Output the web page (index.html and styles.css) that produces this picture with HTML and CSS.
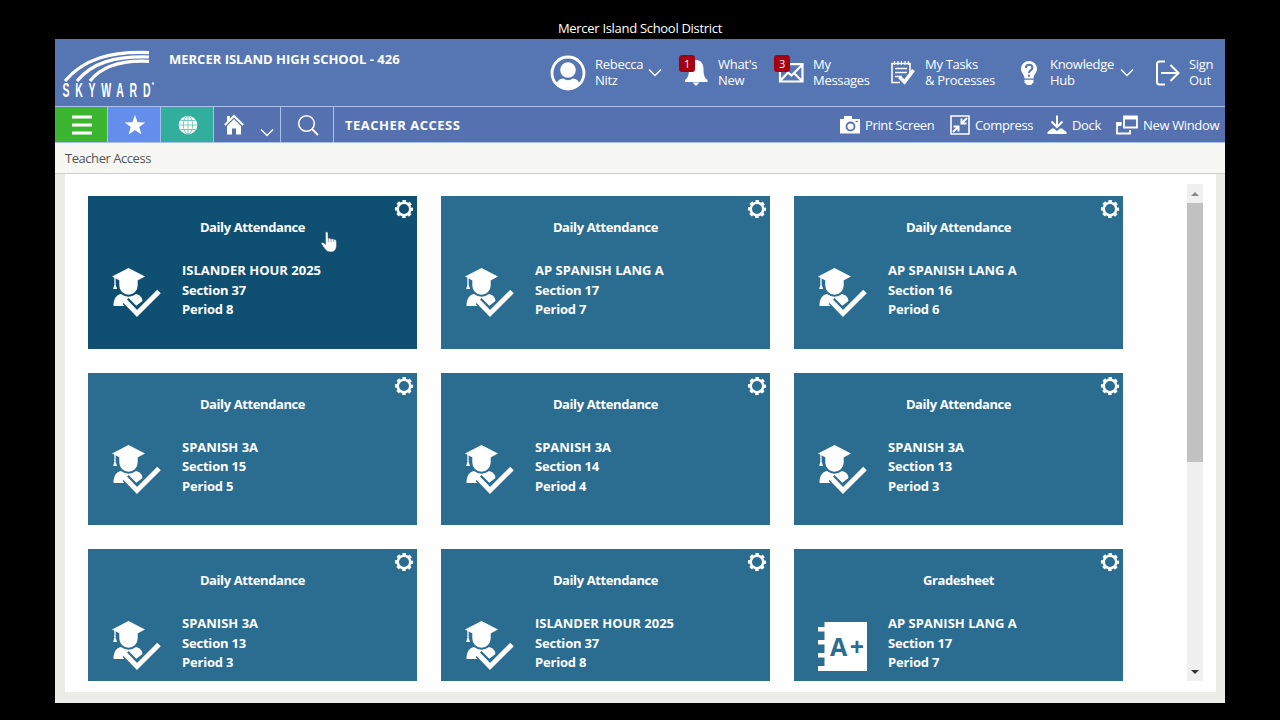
FILE: index.html
```
<!DOCTYPE html>
<html lang="en">
<head>
    <meta charset="utf-8">
    <title>Teacher Access</title>
    <link rel="stylesheet" href="styles.css">
</head>
<body>

    <!-- Shared icons -->
    <svg class="sprite">
        <symbol id="chevron" viewBox="0 0 14 9">
            <path d="M1 1.5 L7 7.5 L13 1.5" fill="none" stroke="currentColor" stroke-width="1.3"/>
        </symbol>
        <symbol id="gear" viewBox="0 0 20 20">
            <circle cx="10" cy="10" r="6.3" fill="none" stroke="currentColor" stroke-width="2.6"/>
            <circle cx="10" cy="10" r="7.8" fill="none" stroke="currentColor" stroke-width="2.6" stroke-dasharray="3.4 2.726" stroke-dashoffset="1.7"/>
        </symbol>
        <symbol id="student" viewBox="0 0 50 52">
            <path d="M1 9.5 L17.5 1 L34 9.5 L27 13.2 L8 13.2 Z" fill="currentColor"/>
            <path d="M8.3 12 H26.7 V18.5 A9.2 9.2 0 0 1 8.3 18.5 Z" fill="currentColor"/>
            <path d="M4 10 V17" stroke="currentColor" stroke-width="1.3"/>
            <path d="M4 15.5 L6 22 H2.2 Z" fill="currentColor"/>
            <path d="M2.5 39 C2.5 32 5 28 10 27 Q17.5 32.5 25 27 C29 28 31 30 31.5 34 L25 39 Z" fill="currentColor"/>
            <path class="cutout" d="M14.5 34 L26 45.5 L47.5 24.5" fill="none" stroke-width="8.5"/>
            <path d="M13.5 33.5 L26 46.5 L48 24.5" fill="none" stroke="currentColor" stroke-width="5"/>
        </symbol>
    </svg>

    <div class="caption">Mercer Island School District</div>

    <div class="window">
        <header>
            <svg class="logo" width="96" height="52" viewBox="0 0 96 52">
                <g fill="none" stroke="#fff" stroke-width="3.2">
                    <path d="M3 32 C21 11 47 2 87 3.600"/>
                    <path d="M15 32 C30 14 52 7 87 8"/>
                    <path d="M28 32 C40 17 60 11 87 12.400"/>
                </g>
                <text class="logo-text" x="1" y="48" textLength="176" transform="scale(0.5 1)">SKYWARD</text>
                <circle cx="91" cy="34.500" r="1.200" fill="#dfe8ff"/>
            </svg>
            <div class="school">MERCER ISLAND HIGH SCHOOL - 426</div>

            <nav class="account">
                <a class="user">
                    <svg width="36" height="36" viewBox="0 0 36 36">
                        <circle cx="18" cy="18" r="16" fill="none" stroke="#fff" stroke-width="2.800"/>
                        <circle cx="18" cy="15" r="7.800" fill="#fff"/>
                        <path d="M6.500 28.500 Q8 24 13 23.500 Q18 27 23 23.500 Q28 24 29.500 28.500 Q25 33 18 33 Q11 33 6.500 28.500 Z" fill="#fff"/>
                    </svg>
                    <span>Rebecca<br>Nitz</span>
                    <svg class="chev" width="14" height="9"><use href="#chevron"/></svg>
                </a>
                <a class="news">
                    <svg width="30" height="32" viewBox="0 0 30 32">
                        <path d="M17 3 C22 3 24.500 7 24.500 12 C24.500 19 26 21 28.500 23 V25 H6 V23 C8.500 21 10 19 10 12 C10 7 13 3 17 3 Z" fill="#fff"/>
                        <path d="M13.500 25.500 H20.500 L17 29 Z" fill="#fff"/>
                    </svg>
                    <b class="badge">1</b>
                    <span>What's<br>New</span>
                </a>
                <a class="messages">
                    <svg width="30" height="32" viewBox="0 0 30 32">
                        <path d="M6 7.200 H28.500 V24.500 H6 Z M6 24 L14 15.500 L17.500 18.500 L28 8 M20 16 L28 24" fill="none" stroke="#fff" stroke-width="2.200"/>
                    </svg>
                    <b class="badge">3</b>
                    <span>My<br>Messages</span>
                </a>
                <a class="tasks">
                    <svg width="26" height="26" viewBox="0 0 26 26">
                        <path d="M20 14 V3.500 H2 V22.500 H10" fill="none" stroke="#fff" stroke-width="1.600"/>
                        <path d="M4.500 1 V5 M8 1 V5 M11.500 1 V5 M15 1 V5 M18.300 1 V5" stroke="#fff" stroke-width="1.200"/>
                        <path d="M5 8.500 H17 M5 12.500 H17 M5 16.500 H12" stroke="#fff" stroke-width="1.500"/>
                        <path d="M9.500 17 L14.500 22 L23.500 10" fill="none" stroke="#fff" stroke-width="3.600"/>
                    </svg>
                    <span>My Tasks<br>&amp; Processes</span>
                </a>
                <a class="hub">
                    <svg width="18" height="26" viewBox="0 0 18 26">
                        <path d="M9 1 A8 8 0 0 1 17 9 C17 13 13.500 14.500 13.500 18.500 H4.500 C4.500 14.500 1 13 1 9 A8 8 0 0 1 9 1 Z" fill="#fff"/>
                        <path d="M5.800 8 Q6 4.800 9.200 4.800 Q12.400 4.800 12.400 7.600 Q12.400 9.300 10.600 10.400 Q9 11.400 9 13" fill="none" stroke="#5575b3" stroke-width="2"/>
                        <path d="M8 14.800 H10 V16.800 H8 Z" fill="#5575b3"/>
                        <path d="M4.500 19.800 H13.500 V22.300 L11 25 H7 L4.500 22.300 Z" fill="#fff"/>
                    </svg>
                    <span>Knowledge<br>Hub</span>
                    <svg class="chev" width="14" height="9"><use href="#chevron"/></svg>
                </a>
                <a class="signout">
                    <svg width="26" height="26" viewBox="0 0 26 26">
                        <path d="M10 1.500 H4.500 Q2 1.500 2 4 V22 Q2 24.500 4.500 24.500 H10 M6 13 H24 M15.500 5 L23.500 13 L15.500 21" fill="none" stroke="#fff" stroke-width="2"/>
                    </svg>
                    <span>Sign<br>Out</span>
                </a>
            </nav>
        </header>

        <div class="toolbar">
            <a class="tool menu">
                <svg width="22" height="20" viewBox="0 0 22 20"><path d="M1 2 H21 M1 10 H21 M1 18 H21" stroke="#fff" stroke-width="3"/></svg>
            </a>
            <a class="tool favorites">
                <svg width="22" height="22" viewBox="0 0 22 22"><path d="M11 1 L13.600 8.300 L21.300 8.400 L15.200 13.100 L17.400 20.500 L11 16.100 L4.600 20.500 L6.800 13.100 L0.700 8.400 L8.400 8.300 Z" fill="#fff"/></svg>
            </a>
            <a class="tool site">
                <svg width="20" height="20" viewBox="0 0 20 20">
                    <circle cx="10" cy="10" r="9.300" fill="#fff"/>
                    <path d="M10 1 V19 M1 10 H19 M2.500 5.500 H17.500 M2.500 14.500 H17.500" stroke="#6cc5bb" stroke-width="0.900"/>
                    <ellipse cx="10" cy="10" rx="4.600" ry="9" fill="none" stroke="#6cc5bb" stroke-width="0.900"/>
                </svg>
            </a>
            <a class="tool home">
                <svg width="20" height="21" viewBox="0 0 20 21">
                    <path d="M0.800 11 L10 2 L19.200 11" fill="none" stroke="#fff" stroke-width="2"/>
                    <path d="M3 2 H6 V6 L3 8.500 Z" fill="#fff"/>
                    <path d="M10 5 L17 12 V20.500 H12 V14.500 H8 V20.500 H3 V12 Z" fill="#fff"/>
                </svg>
                <svg class="chev" width="14" height="9"><use href="#chevron"/></svg>
            </a>
            <a class="tool search">
                <svg width="22" height="22" viewBox="0 0 22 22">
                    <circle cx="9.500" cy="9.500" r="7.800" fill="none" stroke="#fff" stroke-width="1.600"/>
                    <path d="M15 15 L21 21" stroke="#fff" stroke-width="1.800"/>
                </svg>
            </a>
            <h1>TEACHER ACCESS</h1>

            <nav class="actions">
                <a class="print">
                    <svg width="20" height="20" viewBox="0 0 20 20">
                        <path d="M0 4 H4 V1 H12 V4 H20 V18.500 H0 Z" fill="#fff"/>
                        <path d="M15.500 6.500 H18" stroke="#5571b0" stroke-width="1.200"/>
                        <circle cx="10.500" cy="11.500" r="4" fill="none" stroke="#5571b0" stroke-width="1.800"/>
                    </svg>
                    Print Screen
                </a>
                <a class="compress">
                    <svg width="20" height="20" viewBox="0 0 20 20">
                        <path d="M1 1 H19 V19 H1 Z" fill="none" stroke="#fff" stroke-width="1.600"/>
                        <path d="M17 3 L12.500 7.500 M11.500 3.500 V8.500 H16.500 M3 17 L7.500 12.500 M8.500 16.500 V11.500 H3.500" fill="none" stroke="#fff" stroke-width="2"/>
                    </svg>
                    Compress
                </a>
                <a class="dock">
                    <svg width="20" height="20" viewBox="0 0 20 20">
                        <path d="M10 0.500 V11 M4.500 6.500 L10 12 L15.500 6.500" fill="none" stroke="#fff" stroke-width="2"/>
                        <path d="M0.500 19 V17 L5 13.500 H7 L10 16 L13 13.500 H15 L19.500 17 V19 Z" fill="#fff"/>
                    </svg>
                    Dock
                </a>
                <a class="new-window">
                    <svg width="22" height="20" viewBox="0 0 22 20">
                        <path d="M8 1.500 H21 V12.500 H8 Z M5.500 8 H1 V18.500 H14 V15" fill="none" stroke="#fff" stroke-width="1.800"/>
                        <path d="M8 1 H21 V4.500 H8 Z M1 7.500 H5.500 V11 H1 Z" fill="#fff"/>
                    </svg>
                    New Window
                </a>
            </nav>
        </div>

        <div class="breadcrumb">Teacher Access</div>

        <main>
            <div class="panel">
                <div class="tiles">
                    <section class="tile active">
                        <svg class="gear"><use href="#gear"/></svg>
                        <h2>Daily Attendance</h2>
                        <div class="info">
                            <svg><use href="#student"/></svg>
                            <p><span class="course">ISLANDER HOUR 2025</span><br>Section 37<br>Period 8</p>
                        </div>
                    </section>
                    <section class="tile">
                        <svg class="gear"><use href="#gear"/></svg>
                        <h2>Daily Attendance</h2>
                        <div class="info">
                            <svg><use href="#student"/></svg>
                            <p><span class="course">AP SPANISH LANG A</span><br>Section 17<br>Period 7</p>
                        </div>
                    </section>
                    <section class="tile">
                        <svg class="gear"><use href="#gear"/></svg>
                        <h2>Daily Attendance</h2>
                        <div class="info">
                            <svg><use href="#student"/></svg>
                            <p><span class="course">AP SPANISH LANG A</span><br>Section 16<br>Period 6</p>
                        </div>
                    </section>
                    <section class="tile">
                        <svg class="gear"><use href="#gear"/></svg>
                        <h2>Daily Attendance</h2>
                        <div class="info">
                            <svg><use href="#student"/></svg>
                            <p><span class="course">SPANISH 3A</span><br>Section 15<br>Period 5</p>
                        </div>
                    </section>
                    <section class="tile">
                        <svg class="gear"><use href="#gear"/></svg>
                        <h2>Daily Attendance</h2>
                        <div class="info">
                            <svg><use href="#student"/></svg>
                            <p><span class="course">SPANISH 3A</span><br>Section 14<br>Period 4</p>
                        </div>
                    </section>
                    <section class="tile">
                        <svg class="gear"><use href="#gear"/></svg>
                        <h2>Daily Attendance</h2>
                        <div class="info">
                            <svg><use href="#student"/></svg>
                            <p><span class="course">SPANISH 3A</span><br>Section 13<br>Period 3</p>
                        </div>
                    </section>
                    <section class="tile">
                        <svg class="gear"><use href="#gear"/></svg>
                        <h2>Daily Attendance</h2>
                        <div class="info">
                            <svg><use href="#student"/></svg>
                            <p><span class="course">SPANISH 3A</span><br>Section 13<br>Period 3</p>
                        </div>
                    </section>
                    <section class="tile">
                        <svg class="gear"><use href="#gear"/></svg>
                        <h2>Daily Attendance</h2>
                        <div class="info">
                            <svg><use href="#student"/></svg>
                            <p><span class="course">ISLANDER HOUR 2025</span><br>Section 37<br>Period 8</p>
                        </div>
                    </section>
                    <section class="tile">
                        <svg class="gear"><use href="#gear"/></svg>
                        <h2>Gradesheet</h2>
                        <div class="info">
                            <svg viewBox="0 0 50 52">
                                <path d="M7.500 2 H50 V51 H1 V46 H7.500 V37.500 H1 V33 H7.500 V24.500 H1 V20 H7.500 V11.500 H1 V7 H7.500 Z" fill="currentColor"/>
                                <text class="grade" x="13" y="36" textLength="34">A+</text>
                            </svg>
                            <p><span class="course">AP SPANISH LANG A</span><br>Section 17<br>Period 7</p>
                        </div>
                    </section>
                </div>

                <div class="scrollbar">
                    <svg class="arrow up" width="16" height="19" viewBox="0 0 16 19"><path d="M4 12 L8 8 L12 12 Z"/></svg>
                    <div class="thumb"></div>
                    <svg class="arrow down" width="16" height="18" viewBox="0 0 16 18"><path d="M4 7 L8 11 L12 7 Z"/></svg>
                </div>
            </div>
        </main>
    </div>

    <!-- Mouse pointer over the first tile -->
    <svg class="pointer" width="18" height="22" viewBox="0 0 18 22">
        <path d="M6 1 Q8 0 8 2.500 V7 L15 8.500 Q16.500 9 16.500 11 V15 Q16 21 10.500 21 Q7 21 5 18 L1.200 12.800 Q1.500 10.500 4 12 L5.500 13.500 V2 Q5.500 1.200 6 1 Z" fill="#fff" stroke="#3c4a55" stroke-width="0.500"/>
        <path d="M8.300 7.500 V11 M11 8 V11 M13.700 8.500 V11" stroke="#5d7f97" stroke-width="0.700"/>
    </svg>

</body>
</html>
```
FILE: styles.css
```
* {
    box-sizing: border-box;
}

body {
    margin: 0;
    height: 720px;
    overflow: hidden;
    background-color: #000;
    color: #fff;
    font-family: "Open Sans", "Noto Sans", sans-serif;
    font-size: 13px;
}

svg {
    display: block;
    flex: none;
}

.sprite {
    position: absolute;
    width: 0;
    height: 0;
}

.caption {
    height: 39px;
    padding-top: 19px;
    line-height: 18px;
    text-align: center;
    letter-spacing: -0.3px;
}

.window {
    width: 1170px;
    height: 664px;
    margin: 0 auto;
    display: flex;
    flex-direction: column;
    background-color: #ecece8;
}

/* Top bar */
header {
    display: flex;
    height: 67px;
    background-color: #5575b3;
}

.logo {
    margin: 10px 0 0 7px;
}

.logo-text {
    font-family: "Liberation Sans", sans-serif;
    font-size: 21px;
    font-weight: bold;
    fill: #fff;
}

.school {
    margin: 11px 0 0 11px;
    line-height: 18px;
    font-weight: bold;
    white-space: nowrap;
}

.account {
    display: flex;
    margin-left: auto;
}

.account a {
    position: relative;
    display: flex;
    align-items: center;
    line-height: 16px;
    letter-spacing: -0.3px;
    white-space: nowrap;
}

.account span {
    margin-top: -2px;
}

.account .user { width: 129px; gap: 9px; }
.account .news { width: 95px; gap: 9px; }
.account .messages { width: 116px; gap: 9px; }
.account .tasks { width: 130px; gap: 9px; }
.account .hub { width: 135px; gap: 12px; }
.account .signout { width: 70px; gap: 8px; }

.user span { width: 44px; }
.hub span { width: 58px; }

.badge {
    position: absolute;
    left: 0;
    top: 16px;
    width: 16px;
    height: 17px;
    border-radius: 3px;
    background-color: #a50012;
    font-size: 11px;
    font-weight: normal;
    line-height: 17px;
    text-align: center;
}

/* Second bar */
.toolbar {
    display: flex;
    height: 37px;
    background-color: #5571b0;
    border-top: 1px solid #a9c0ee;
    border-bottom: 1px solid #a9c0ee;
}

.tool {
    display: flex;
    align-items: center;
    justify-content: center;
    width: 53px;
    padding-left: 1px;
    border-right: 1px solid #a9c0ee;
}

.menu { background-color: #3cb530; }
.favorites { background-color: #648eec; }
.site { background-color: #31ae9c; }

.home {
    width: 67px;
    padding-left: 3px;
    gap: 16px;
}

.home .chev {
    margin-top: 16px;
}

.toolbar h1 {
    margin: 0 0 0 11px;
    font-size: 13px;
    line-height: 37px;
    letter-spacing: 0.5px;
    white-space: nowrap;
}

.actions {
    display: flex;
    margin-left: auto;
}

.actions a {
    display: flex;
    align-items: center;
    gap: 5px;
    letter-spacing: -0.35px;
    white-space: nowrap;
}

.print { width: 110px; }
.compress { width: 97px; }
.dock { width: 69px; }
.new-window { width: 109px; }

.breadcrumb {
    height: 31px;
    padding-left: 10px;
    background-color: #f7f7f3;
    border-bottom: 1px solid #cfcfca;
    color: #555;
    line-height: 31px;
    letter-spacing: -0.45px;
}

/* Tiles */
main {
    flex: 1;
    padding: 0 9px 11px 10px;
}

.panel {
    display: flex;
    justify-content: space-between;
    height: 518px;
    padding: 10px 13px 11px 23px;
    background-color: #fff;
}

.tiles {
    display: grid;
    grid-template-columns: repeat(3, 329px);
    grid-auto-rows: 152.5px;
    gap: 24px;
    height: 497px;
    padding-top: 12px;
    overflow: hidden;
}

.tile {
    --tile-color: #2b6d91;
    position: relative;
    background-color: var(--tile-color);
    color: #fff;
}

.tile.active {
    --tile-color: #0f4f72;
}

.tile h2 {
    margin: 21px 0 0;
    font-size: 13px;
    line-height: 20px;
    text-align: center;
    letter-spacing: -0.4px;
}

.tile p {
    margin: 0;
    font-weight: bold;
    line-height: 19.7px;
    letter-spacing: -0.2px;
}

.course {
    letter-spacing: 0;
}

.gear {
    position: absolute;
    right: 3px;
    top: 3px;
    width: 20px;
    height: 20px;
}

.info {
    display: flex;
    gap: 21px;
    margin: 24px 0 0 23px;
}

.info svg {
    width: 50px;
    height: 52px;
    margin-top: 6px;
}

.cutout {
    stroke: var(--tile-color);
}

.grade {
    font-size: 25px;
    font-weight: bold;
    fill: var(--tile-color);
}

.scrollbar {
    display: flex;
    flex-direction: column;
    width: 16px;
    background-color: #f0f0f0;
}

.thumb {
    height: 259px;
    background-color: #c1c1c1;
}

.arrow.up {
    fill: #8a8a8a;
}

.arrow.down {
    margin-top: auto;
    fill: #333;
}

.pointer {
    position: absolute;
    left: 320px;
    top: 231px;
}
```
